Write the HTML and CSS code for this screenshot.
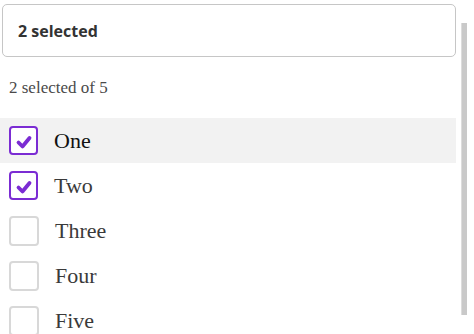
FILE: index.html
```html
<!DOCTYPE html>
<html>
<head>
<meta charset="utf-8">
<link rel="stylesheet" href="styles.css">
</head>
<body>
<div class="page">
  <div class="content">
    <div class="field">2 selected</div>
    <div class="status">2 selected of 5</div>
    <ul class="list">
      <li class="row active"><span class="box checked"><svg viewBox="0 0 24 24" width="24" height="24"><path d="M6.5 13.5 L10.5 17.5 L17.5 9" fill="none" stroke="#7b2cd3" stroke-width="3.8" stroke-linecap="round" stroke-linejoin="round"/></svg></span><span class="label dark">One</span></li>
      <li class="row"><span class="box checked"><svg viewBox="0 0 24 24" width="24" height="24"><path d="M6.5 13.5 L10.5 17.5 L17.5 9" fill="none" stroke="#7b2cd3" stroke-width="3.8" stroke-linecap="round" stroke-linejoin="round"/></svg></span><span class="label">Two</span></li>
      <li class="row"><span class="box"></span><span class="label">Three</span></li>
      <li class="row"><span class="box"></span><span class="label">Four</span></li>
      <li class="row"><span class="box"></span><span class="label">Five</span></li>
    </ul>
  </div>
  <div class="scrollbar"><div class="thumb"></div></div>
</div>
</body>
</html>
```
FILE: styles.css
```css
html, body {
  margin: 0;
  padding: 0;
  background: #fff;
}
.page {
  width: 474px;
  height: 334px;
  overflow: hidden;
  display: grid;
  grid-template-columns: 457px 6px;
  column-gap: 4px;
}
.content {
  display: flex;
  flex-direction: column;
}
.field {
  margin: 4px 1px 0 2px;
  height: 51px;
  border: 1px solid #c6c6c6;
  border-radius: 5px;
  box-sizing: content-box;
  display: flex;
  align-items: center;
  padding-left: 15px;
  font-family: "Open Sans", sans-serif;
  font-weight: 700;
  font-size: 16px;
  color: #333;
}
.status {
  height: 61px;
  display: flex;
  align-items: center;
  padding-left: 9px;
  font-family: "Liberation Serif", "Times New Roman", serif;
  font-size: 17px;
  color: #4a4a4a;
}
.list {
  list-style: none;
  margin: 0;
  padding: 0;
  font-family: "Liberation Serif", "Times New Roman", serif;
}
.row {
  height: 45px;
  display: flex;
  align-items: center;
  padding-left: 9px;
  margin-right: 1px;
}
.row.active {
  background: #f2f2f2;
}
.box {
  width: 26px;
  height: 26px;
  border: 2px solid #d8d8d8;
  border-radius: 4px;
  display: flex;
  align-items: center;
  justify-content: center;
  background: #fff;
  flex: none;
}
.box.checked {
  border: 2.5px solid #7b2cd3;
  width: 25px;
  height: 25px;
}
.box svg {
  display: block;
  flex: none;
}
.label {
  margin-left: 16px;
  font-family: "Liberation Serif", "Times New Roman", serif;
  font-size: 22px;
  color: #3a3a3a;
}
.label.dark {
  color: #111;
}
.scrollbar {
  padding-top: 23px;
}
.thumb {
  height: 292px;
  background: #c9c9c9;
  border-left: 1px solid #dcdcdc;
  box-sizing: border-box;
}
```
